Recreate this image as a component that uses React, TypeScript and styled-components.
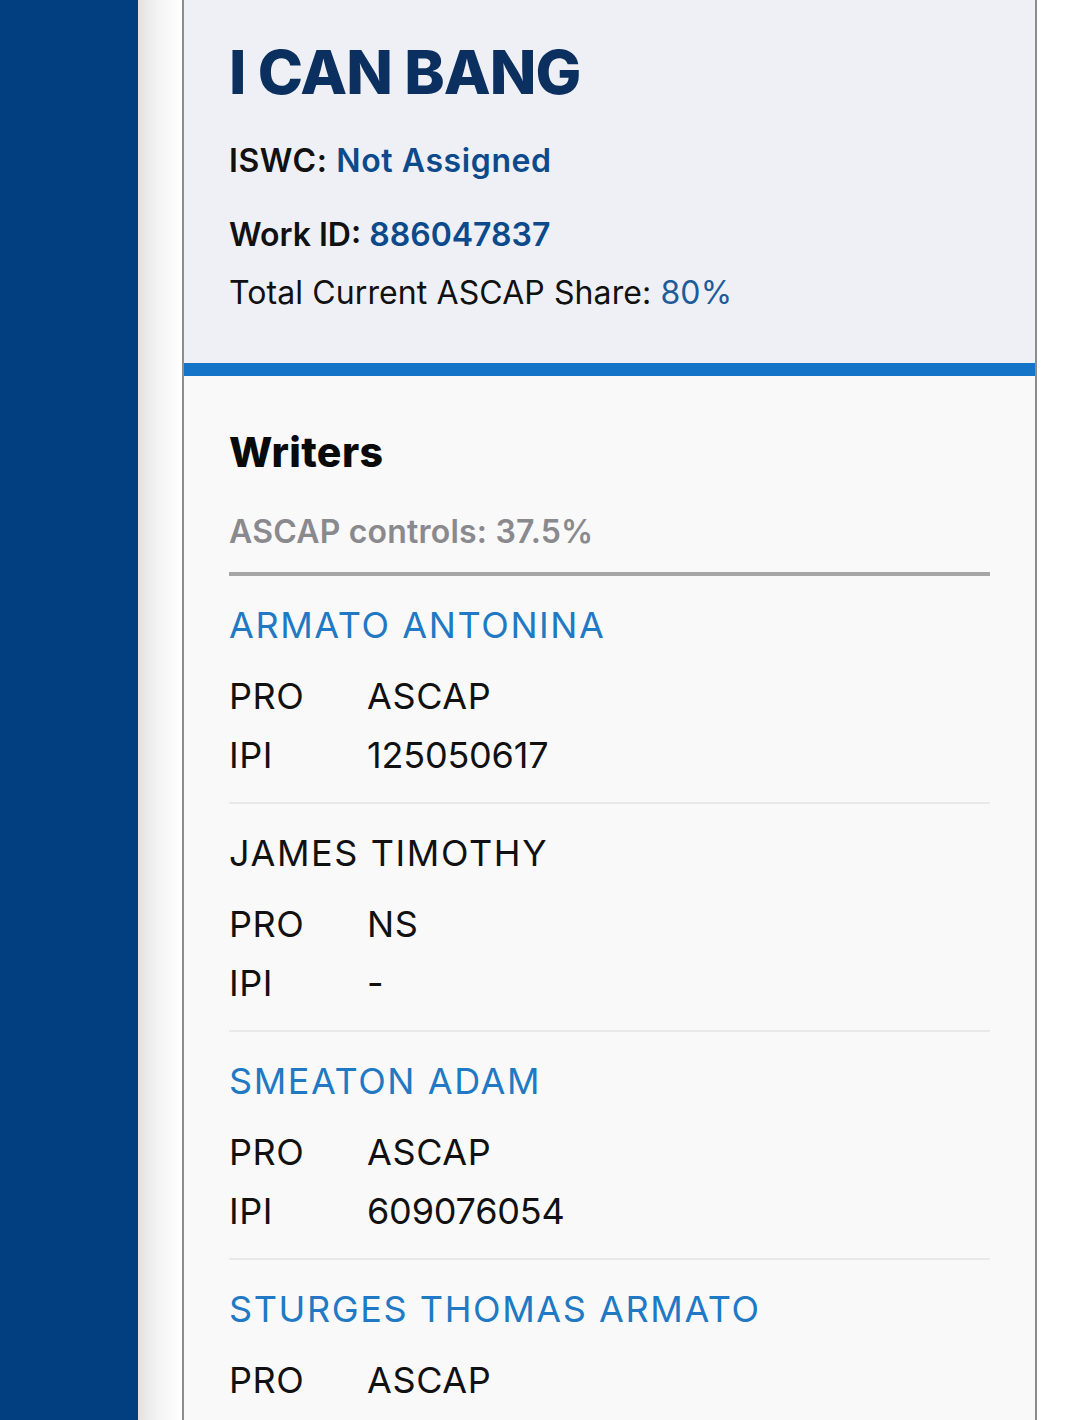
import React from "react";
import styled, { createGlobalStyle } from "styled-components";

const GlobalStyle = createGlobalStyle`
  html, body { margin: 0; padding: 0; background: #ffffff; }
  body { font-family: Inter, "Liberation Sans", sans-serif; color: #111111; }
  * { box-sizing: border-box; }
`;

const Page = styled.div`
  display: flex;
  height: 1420px;
  overflow: hidden;
  background: #ffffff;
`;

const Sidebar = styled.aside`
  width: 138px;
  flex: none;
  background: #013f80;
`;

const Gutter = styled.div`
  width: 44px;
  flex: none;
  background: linear-gradient(to right, #e2e2e2 0%, #f4f4f4 45%, #ffffff 100%);
`;

const Card = styled.main`
  width: 855px;
  flex: none;
  border-left: 2px solid #8c8c8c;
  border-right: 2px solid #8c8c8c;
  background: #f9f9f9;
  display: flex;
  flex-direction: column;
`;

const Header = styled.header`
  background: #eef0f5;
  padding: 36px 45px 50px;
  border-bottom: 13px solid #1475c8;
`;

const Title = styled.h1`
  margin: 0;
  font-size: 61px;
  line-height: 72px;
  font-weight: 800;
  letter-spacing: -1px;
  color: #0b305f;
`;

const Meta = styled.p<{ $gap: number; $weight: number; $spacing: number }>`
  margin: ${(p) => p.$gap}px 0 0;
  font-size: 32px;
  line-height: 40px;
  font-weight: ${(p) => p.$weight};
  letter-spacing: ${(p) => p.$spacing}px;
  color: #111111;
`;

const MetaValue = styled.span<{ $tone: string }>`
  color: ${(p) => p.$tone};
`;

const Body = styled.section`
  padding: 52px 45px 0;
`;

const SectionTitle = styled.h2`
  margin: 0;
  font-size: 41px;
  line-height: 48px;
  font-weight: 800;
  letter-spacing: 0.4px;
  color: #0a0a0a;
`;

const Controls = styled.p`
  margin: 36px 0 0;
  font-size: 32px;
  line-height: 40px;
  font-weight: 600;
  letter-spacing: 0.2px;
  color: #8a8a8e;
  padding-bottom: 20px;
  border-bottom: 4px solid #a6a6a6;
`;

const Writer = styled.article`
  padding: 27px 0 17px;
  border-bottom: 2px solid #e9e9e9;
`;

const WriterName = styled.div<{ $member: boolean }>`
  font-size: 36px;
  line-height: 44px;
  font-weight: 400;
  letter-spacing: 1.6px;
  color: ${(p) => (p.$member ? "#2179c4" : "#111111")};
  margin-bottom: 20px;
`;

const InfoRow = styled.div`
  display: grid;
  grid-template-columns: 138px 1fr;
  font-size: 36px;
  line-height: 59px;
  letter-spacing: 0.6px;
  color: #111111;
`;

const InfoValue = styled.span<{ $numeric?: boolean }>`
  letter-spacing: ${(p) => (p.$numeric ? "-0.2px" : "0.6px")};
`;

type W = { name: string; member: boolean; pro: string; ipi?: string };

const writers: W[] = [
  { name: "ARMATO ANTONINA", member: true, pro: "ASCAP", ipi: "125050617" },
  { name: "JAMES TIMOTHY", member: false, pro: "NS", ipi: "-" },
  { name: "SMEATON ADAM", member: true, pro: "ASCAP", ipi: "609076054" },
  { name: "STURGES THOMAS ARMATO", member: true, pro: "ASCAP" },
];

export default function App() {
  return (
    <>
      <GlobalStyle />
      <Page>
        <Sidebar />
        <Gutter />
        <Card>
          <Header>
            <Title>I CAN BANG</Title>
            <Meta $gap={33} $weight={600} $spacing={0.6}>
              ISWC: <MetaValue $tone="#0c4a8c">Not Assigned</MetaValue>
            </Meta>
            <Meta $gap={34} $weight={600} $spacing={0}>
              Work ID: <MetaValue $tone="#0c4a8c">886047837</MetaValue>
            </Meta>
            <Meta $gap={18} $weight={400} $spacing={0.1}>
              Total Current ASCAP Share: <MetaValue $tone="#1d5c99">80%</MetaValue>
            </Meta>
          </Header>
          <Body>
            <SectionTitle>Writers</SectionTitle>
            <Controls>ASCAP controls: 37.5%</Controls>
            {writers.map((w) => (
              <Writer key={w.name}>
                <WriterName $member={w.member}>{w.name}</WriterName>
                <InfoRow>
                  <span>PRO</span>
                  <InfoValue>{w.pro}</InfoValue>
                </InfoRow>
                {w.ipi && (
                  <InfoRow>
                    <span>IPI</span>
                    <InfoValue $numeric>{w.ipi}</InfoValue>
                  </InfoRow>
                )}
              </Writer>
            ))}
          </Body>
        </Card>
      </Page>
    </>
  );
}
